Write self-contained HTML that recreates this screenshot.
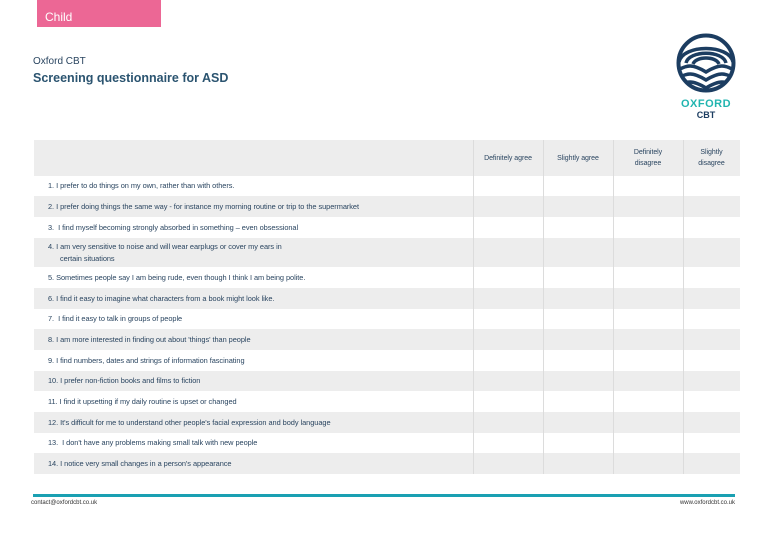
<!DOCTYPE html>
<html><head><style>
*{margin:0;padding:0;box-sizing:border-box}
body{width:768px;height:543px;background:#fff;position:relative;font-family:"Liberation Sans",sans-serif;color:#2a4560;overflow:hidden}
.pink{position:absolute;left:37px;top:0;width:124px;height:27px;background:#ec6795;color:#fff;font-size:12px;padding:10px 0 0 8px;line-height:14px}
.t1{position:absolute;left:33px;top:56px;font-size:10px;color:#2a4560}
.t2{position:absolute;left:33px;top:71px;font-size:12.5px;font-weight:bold;color:#2b5470;letter-spacing:0}
.row{position:absolute;left:34px;width:706px;font-size:7.4px;letter-spacing:-.05px}
.row .c{position:absolute;top:0;bottom:0;border-left:1px solid #dcdcdc}
.row .tx{position:absolute;left:14px;top:50%;transform:translateY(-50%);line-height:12px;white-space:nowrap}
.g{background:#ededed}
.h{font-size:7px;text-align:center;line-height:11px}
.hl{position:absolute;top:0;bottom:0;display:flex;align-items:center;justify-content:center}
.line{position:absolute;left:33px;top:494px;width:702px;height:3px;background:#1aa0b2}
.ft{position:absolute;top:500px;font-size:6px;color:#333}
</style></head><body>
<div class="pink">Child</div>
<div class="t1">Oxford CBT</div>
<div class="t2">Screening questionnaire for ASD</div>
<svg style="position:absolute;left:675px;top:32px" width="62" height="62" viewBox="0 0 62 62">
<defs><clipPath id="cp"><circle cx="31" cy="31" r="26"/></clipPath></defs>
<circle cx="31" cy="31" r="27.5" fill="none" stroke="#1c3d61" stroke-width="4"/>
<g clip-path="url(#cp)" fill="none" stroke="#1c3d61" stroke-width="3.5">
<path d="M4 30 C8 12 54 12 58 30"/>
<path d="M11 31 C14 18 48 18 51 31"/>
<path d="M18 32 C21 24 41 24 44 32"/>
<path d="M0 40 C12 32 18 32 31 40 C44 32 50 32 62 40"/>
<path d="M0 48 C12 40 18 40 31 48 C44 40 50 40 62 48"/>
<path d="M0 56 C12 48 18 48 31 56 C44 48 50 48 62 56"/>
</g></svg>
<div style="position:absolute;left:672px;top:98px;width:68px;text-align:center;font-size:11px;font-weight:bold;color:#22b5b0;letter-spacing:.5px">OXFORD</div>
<div style="position:absolute;left:672px;top:110px;width:68px;text-align:center;font-size:9px;font-weight:bold;color:#1c3d61">CBT</div>

<div class="row g h" style="top:140px;height:36px">
<div class="c" style="left:439px"></div><div class="c" style="left:509px"></div><div class="c" style="left:579px"></div><div class="c" style="left:649px"></div>
<div class="hl" style="left:439px;width:70px">Definitely agree</div>
<div class="hl" style="left:509px;width:70px">Slightly agree</div>
<div class="hl" style="left:579px;width:70px">Definitely<br>disagree</div>
<div class="hl" style="left:649px;width:57px">Slightly<br>disagree</div>
</div>

<div class="row" style="top:176px;height:20px"><div class="tx">1. I prefer to do things on my own, rather than with others.</div><div class="c" style="left:439px"></div><div class="c" style="left:509px"></div><div class="c" style="left:579px"></div><div class="c" style="left:649px"></div></div>
<div class="row g" style="top:196px;height:21px"><div class="tx">2. I prefer doing things the same way - for instance my morning routine or trip to the supermarket</div><div class="c" style="left:439px"></div><div class="c" style="left:509px"></div><div class="c" style="left:579px"></div><div class="c" style="left:649px"></div></div>
<div class="row" style="top:217px;height:21px"><div class="tx">3.&nbsp; I find myself becoming strongly absorbed in something – even obsessional</div><div class="c" style="left:439px"></div><div class="c" style="left:509px"></div><div class="c" style="left:579px"></div><div class="c" style="left:649px"></div></div>
<div class="row g" style="top:238px;height:29px"><div class="tx">4. I am very sensitive to noise and will wear earplugs or cover my ears in<br>&nbsp;&nbsp;&nbsp;&nbsp;&nbsp;&nbsp;certain situations</div><div class="c" style="left:439px"></div><div class="c" style="left:509px"></div><div class="c" style="left:579px"></div><div class="c" style="left:649px"></div></div>
<div class="row" style="top:267px;height:21px"><div class="tx">5. Sometimes people say I am being rude, even though I think I am being polite.</div><div class="c" style="left:439px"></div><div class="c" style="left:509px"></div><div class="c" style="left:579px"></div><div class="c" style="left:649px"></div></div>
<div class="row g" style="top:288px;height:21px"><div class="tx">6. I find it easy to imagine what characters from a book might look like.</div><div class="c" style="left:439px"></div><div class="c" style="left:509px"></div><div class="c" style="left:579px"></div><div class="c" style="left:649px"></div></div>
<div class="row" style="top:309px;height:20px"><div class="tx">7.&nbsp; I find it easy to talk in groups of people</div><div class="c" style="left:439px"></div><div class="c" style="left:509px"></div><div class="c" style="left:579px"></div><div class="c" style="left:649px"></div></div>
<div class="row g" style="top:329px;height:21px"><div class="tx">8. I am more interested in finding out about 'things' than people</div><div class="c" style="left:439px"></div><div class="c" style="left:509px"></div><div class="c" style="left:579px"></div><div class="c" style="left:649px"></div></div>
<div class="row" style="top:350px;height:21px"><div class="tx">9. I find numbers, dates and strings of information fascinating</div><div class="c" style="left:439px"></div><div class="c" style="left:509px"></div><div class="c" style="left:579px"></div><div class="c" style="left:649px"></div></div>
<div class="row g" style="top:371px;height:20px"><div class="tx">10. I prefer non-fiction books and films to fiction</div><div class="c" style="left:439px"></div><div class="c" style="left:509px"></div><div class="c" style="left:579px"></div><div class="c" style="left:649px"></div></div>
<div class="row" style="top:391px;height:21px"><div class="tx">11. I find it upsetting if my daily routine is upset or changed</div><div class="c" style="left:439px"></div><div class="c" style="left:509px"></div><div class="c" style="left:579px"></div><div class="c" style="left:649px"></div></div>
<div class="row g" style="top:412px;height:21px"><div class="tx">12. It's difficult for me to understand other people's facial expression and body language</div><div class="c" style="left:439px"></div><div class="c" style="left:509px"></div><div class="c" style="left:579px"></div><div class="c" style="left:649px"></div></div>
<div class="row" style="top:433px;height:20px"><div class="tx">13.&nbsp; I don't have any problems making small talk with new people</div><div class="c" style="left:439px"></div><div class="c" style="left:509px"></div><div class="c" style="left:579px"></div><div class="c" style="left:649px"></div></div>
<div class="row g" style="top:453px;height:21px"><div class="tx">14. I notice very small changes in a person's appearance</div><div class="c" style="left:439px"></div><div class="c" style="left:509px"></div><div class="c" style="left:579px"></div><div class="c" style="left:649px"></div></div>

<div class="line"></div>
<div class="ft" style="left:31px">contact@oxfordcbt.co.uk</div>
<div class="ft" style="right:33px">www.oxfordcbt.co.uk</div>
</body></html>
